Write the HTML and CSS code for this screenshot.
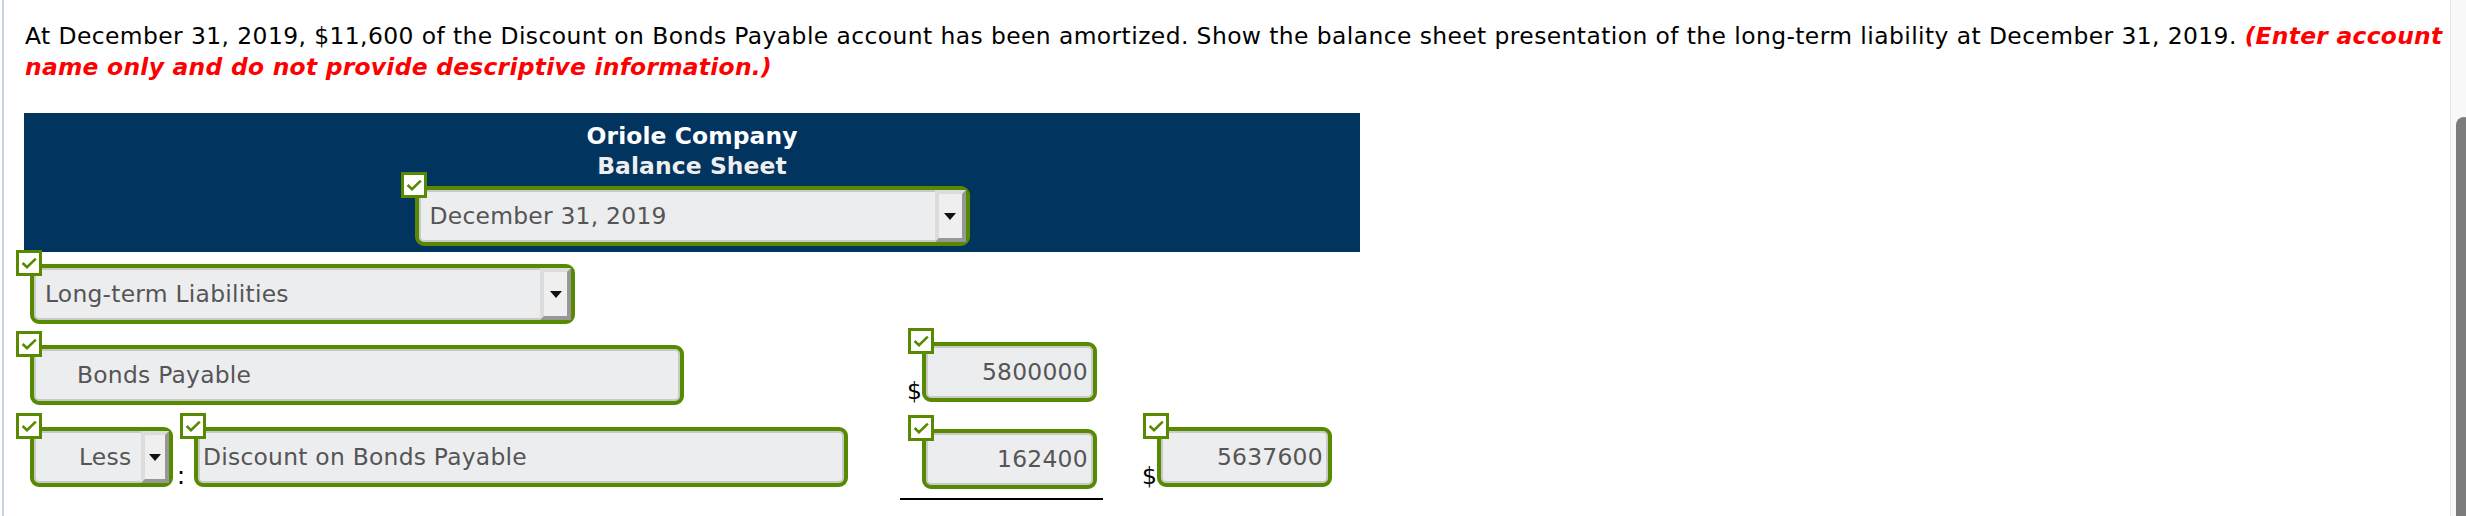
FILE: index.html
```html
<!DOCTYPE html>
<html lang="en">
<head>
<meta charset="utf-8">
<title>Oriole Company – Balance Sheet</title>
<link rel="stylesheet" href="styles.css">
</head>
<body>
<main class="page">
  <p class="question">At December 31, 2019, $11,600 of the Discount on Bonds Payable account has been amortized. Show the balance sheet presentation of the long-term liability at December 31, 2019. <em class="note">(Enter account<br>name only and do not provide descriptive information.)</em></p>

  <section class="sheet">
    <header class="sheet-head">
      <div class="co">Oriole Company</div>
      <div class="title">Balance Sheet</div>
      <div class="field date-sel">
        <span class="chk"><svg viewBox="0 0 20 20"><polyline points="3.6,10 8,14.2 16.8,5.6"/></svg></span>
        <span class="val">December 31, 2019</span>
        <span class="dd"></span>
      </div>
    </header>

    <div class="field section-sel">
      <span class="chk"><svg viewBox="0 0 20 20"><polyline points="3.6,10 8,14.2 16.8,5.6"/></svg></span>
      <span class="val">Long-term Liabilities</span>
      <span class="dd"></span>
    </div>

    <div class="lines">
      <div class="cell-label">
        <div class="field bonds">
          <span class="chk"><svg viewBox="0 0 20 20"><polyline points="3.6,10 8,14.2 16.8,5.6"/></svg></span>
          <span class="val indent">Bonds Payable</span>
        </div>
      </div>
      <div class="amt">
        <span class="cur">$</span>
        <div class="field num-field">
          <span class="chk"><svg viewBox="0 0 20 20"><polyline points="3.6,10 8,14.2 16.8,5.6"/></svg></span>
          <span class="val num">5800000</span>
        </div>
      </div>
      <div class="gap"></div>
      <div class="amt-empty"></div>

      <div class="cell-label label-row">
        <div class="field less-sel">
          <span class="chk"><svg viewBox="0 0 20 20"><polyline points="3.6,10 8,14.2 16.8,5.6"/></svg></span>
          <span class="val less">Less</span>
          <span class="dd"></span>
        </div>
        <span class="colon">:</span>
        <div class="field discount">
          <span class="chk"><svg viewBox="0 0 20 20"><polyline points="3.6,10 8,14.2 16.8,5.6"/></svg></span>
          <span class="val tight">Discount on Bonds Payable</span>
        </div>
      </div>
      <div class="amt underlined">
        <span class="cur blank">$</span>
        <div class="field num-field low">
          <span class="chk"><svg viewBox="0 0 20 20"><polyline points="3.6,10 8,14.2 16.8,5.6"/></svg></span>
          <span class="val num">162400</span>
        </div>
      </div>
      <div class="gap"></div>
      <div class="amt total">
        <span class="cur">$</span>
        <div class="field num-field">
          <span class="chk"><svg viewBox="0 0 20 20"><polyline points="3.6,10 8,14.2 16.8,5.6"/></svg></span>
          <span class="val num">5637600</span>
        </div>
      </div>
    </div>
  </section>
</main>

<div class="scrollbar"><div class="thumb"></div></div>
</body>
</html>
```

FILE: styles.css
```css
* { box-sizing: border-box; }

html, body {
  margin: 0;
  padding: 0;
  background: #ffffff;
  overflow: hidden;
}

body {
  font-family: "DejaVu Sans", Verdana, sans-serif;
  font-size: 23.4px;
  color: #000;
}

.page {
  margin-left: 2px;
  border-left: 2px solid #cbd2e2;
  padding-left: 20px;
  min-height: 100vh;
}

.question {
  margin: 0;
  padding: 21px 0 0 1px;
  font-size: 23.4px;
  line-height: 31px;
  letter-spacing: 0.42px;
  white-space: nowrap;
}

.note {
  color: #ff0000;
  font-weight: bold;
  font-style: italic;
  letter-spacing: 0.26px;
}

.sheet {
  margin-top: 30px;
}

.sheet-head {
  width: 1336px;
  height: 139px;
  background: #01345f;
  padding-top: 8px;
  text-align: center;
  color: #ffffff;
  font-weight: bold;
  line-height: 30px;
  letter-spacing: 0.1px;
}

.sheet-head .title {
  color: #eeeeee;
}

/* form fields */
.field {
  position: relative;
  display: flex;
  align-items: center;
  height: 60px;
  border: 4px solid #578a00;
  border-radius: 9px;
  background: #ecedef;
  box-shadow: inset 0 0 0 2px #c9c9c9;
  color: #555555;
  font-size: 23.4px;
  font-weight: normal;
  letter-spacing: 0.25px;
  text-align: left;
}

.val {
  flex: 1;
  padding-left: 11px;
  white-space: nowrap;
  line-height: normal;
}

.val.indent { padding-left: 43px; }
.val.less { padding-left: 45px; }
.val.tight { padding-left: 5px; }
.val.num {
  text-align: right;
  padding-left: 0;
  padding-right: 5px;
}

.dd {
  align-self: stretch;
  width: 31px;
  border: 4px solid;
  border-color: #dcdcdc #979797 #979797 #dcdcdc;
  background: #efefef;
  display: flex;
  align-items: center;
  justify-content: center;
}

.dd::after {
  content: "";
  border-left: 6px solid transparent;
  border-right: 6px solid transparent;
  border-top: 7px solid #111111;
}

.chk {
  position: absolute;
  left: -18px;
  top: -18px;
  width: 26px;
  height: 26px;
  border: 3px solid #578a00;
  background: #ffffff;
  display: block;
}

.chk svg {
  display: block;
  width: 20px;
  height: 20px;
  fill: none;
  stroke: #578a00;
  stroke-width: 2.6;
}

.date-sel {
  width: 555px;
  margin: 5px auto 0;
}

.section-sel {
  width: 545px;
  margin: 12px 0 0 6px;
}

/* line items */
.lines {
  display: grid;
  grid-template-columns: 876px 203px 33px 203px;
  row-gap: 22px;
  margin-top: 18px;
  align-items: start;
}

.cell-label {
  padding-left: 6px;
}

.label-row {
  display: flex;
  align-items: flex-end;
}

.bonds {
  width: 654px;
  margin-top: 3px;
}

.less-sel {
  width: 143px;
}

.less-sel .dd {
  width: 28px;
}

.colon {
  width: 21px;
  padding-left: 4px;
  line-height: 22px;
  font-size: 24px;
  color: #000;
}

.discount {
  width: 654px;
}

.amt {
  display: flex;
  align-items: flex-end;
  padding-left: 7px;
}

.amt.total {
  padding-left: 6px;
}

.cur {
  line-height: 22px;
  color: #000;
}

.cur.blank {
  visibility: hidden;
}

.num-field {
  width: 175px;
}

.num-field.low {
  margin-top: 2px;
}

.underlined {
  padding-bottom: 9px;
  border-bottom: 2px solid #000;
}

/* browser scrollbar overlay */
.scrollbar {
  position: fixed;
  top: 0;
  right: 0;
  width: 16px;
  height: 100vh;
  background: #f8f8f8;
  border-left: 1px solid #e4e4e4;
  overflow: hidden;
}

.thumb {
  position: absolute;
  left: 5px;
  top: 117px;
  width: 16px;
  height: 600px;
  background: #7c7c7c;
  border-radius: 8px;
}
```
